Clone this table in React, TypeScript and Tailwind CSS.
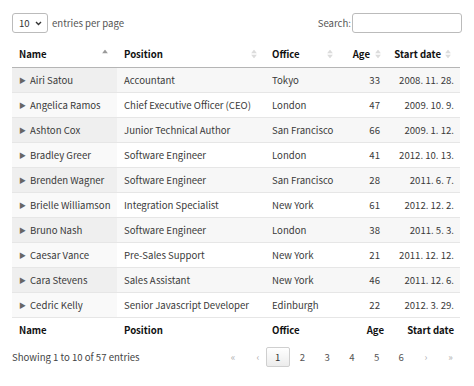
const rows = [
  ['Airi Satou', 'Accountant', 'Tokyo', 33, '2008. 11. 28.'],
  ['Angelica Ramos', 'Chief Executive Officer (CEO)', 'London', 47, '2009. 10. 9.'],
  ['Ashton Cox', 'Junior Technical Author', 'San Francisco', 66, '2009. 1. 12.'],
  ['Bradley Greer', 'Software Engineer', 'London', 41, '2012. 10. 13.'],
  ['Brenden Wagner', 'Software Engineer', 'San Francisco', 28, '2011. 6. 7.'],
  ['Brielle Williamson', 'Integration Specialist', 'New York', 61, '2012. 12. 2.'],
  ['Bruno Nash', 'Software Engineer', 'London', 38, '2011. 5. 3.'],
  ['Caesar Vance', 'Pre-Sales Support', 'New York', 21, '2011. 12. 12.'],
  ['Cara Stevens', 'Sales Assistant', 'New York', 46, '2011. 12. 6.'],
  ['Cedric Kelly', 'Senior Javascript Developer', 'Edinburgh', 22, '2012. 3. 29.'],
] as const;

function SortIcon({ active }: { active?: boolean }) {
  return (
    <span className="absolute right-[9px] top-1/2 -translate-y-1/2 flex flex-col items-center gap-[1px]">
      <svg width="6" height="4" viewBox="0 0 6 4">
        <path d="M3 0L6 4H0z" fill={active ? '#9a9a9a' : '#dcdcdc'} />
      </svg>
      <svg width="6" height="4" viewBox="0 0 6 4">
        <path d="M0 0H6L3 4z" fill={active ? '#ffffff' : '#dcdcdc'} />
      </svg>
    </span>
  );
}

export default function App() {
  return (
    <div
      className="w-[474px] h-[386px] bg-white px-3 text-[9.6px] text-[#3a3a3a]"
      style={{ fontFamily: '"Noto Sans CJK KR", "Noto Sans", sans-serif' }}
    >
      <div className="flex items-center justify-between pt-[13px] h-[33px]">
        <div className="flex items-center gap-[4px]">
          <div className="w-[36px] h-[20px] border border-[#bbb] rounded-[3px] flex items-center justify-between pl-[6px] pr-[5px] text-[#333]">
            <span>10</span>
            <svg width="7" height="5" viewBox="0 0 7 5">
              <path d="M1 1l2.5 2.5L6 1" stroke="#333" strokeWidth="1.4" fill="none" />
            </svg>
          </div>
          <span className="text-[#555]">entries per page</span>
        </div>
        <div className="flex items-center gap-[1px]">
          <span className="text-[#555]">Search:</span>
          <div className="w-[110px] h-[20px] border border-[#bbb] rounded-[3px]" />
        </div>
      </div>

      <table className="mt-[9px] w-[448px] table-fixed border-collapse leading-[14px]">
        <colgroup>
          <col className="w-[105px]" />
          <col className="w-[149px]" />
          <col className="w-[76px]" />
          <col className="w-[48px]" />
          <col className="w-[70px]" />
        </colgroup>
        <thead>
          <tr className="h-[25px] border-b border-[#b5b5b5] font-bold text-[#111] whitespace-nowrap">
            <th className="relative text-left pl-[7px]">Name<SortIcon active /></th>
            <th className="relative text-left pl-[7px]">Position<SortIcon /></th>
            <th className="relative text-left pl-[6px]">Office<SortIcon /></th>
            <th className="relative text-right pr-[20px]">Age<SortIcon /></th>
            <th className="relative text-right pr-[19px]">Start date<SortIcon /></th>
          </tr>
        </thead>
        <tbody>
          {rows.map((r, i) => {
            const odd = i % 2 === 0;
            return (
              <tr
                key={r[0]}
                className={`h-[25px] border-b border-[#e6e6e6] whitespace-nowrap ${odd ? 'bg-[#f7f7f7]' : 'bg-white'}`}
              >
                <td className={`pl-[7px] ${odd ? 'bg-[#efefef]' : 'bg-[#f9f9f9]'}`}>
                  <span className="inline-block text-[7px] text-[#666] mr-[4px] align-[1px]">▶</span>
                  {r[0]}
                </td>
                <td className="pl-[7px]">{r[1]}</td>
                <td className="pl-[6px]">{r[2]}</td>
                <td className="text-right pr-[10px]">{r[3]}</td>
                <td className="text-right pr-[6px]">{r[4]}</td>
              </tr>
            );
          })}
        </tbody>
        <tfoot>
          <tr className="h-[25px] border-t border-[#b5b5b5] font-bold text-[#111] whitespace-nowrap">
            <td className="pl-[7px]">Name</td>
            <td className="pl-[7px]">Position</td>
            <td className="pl-[6px]">Office</td>
            <td className="text-right pr-[6px]">Age</td>
            <td className="text-right pr-[6px]">Start date</td>
          </tr>
        </tfoot>
      </table>

      <div className="flex items-center justify-between mt-[5px] h-[20px]">
        <span className="text-[#444]">Showing 1 to 10 of 57 entries</span>
        <div className="flex items-center text-[#555] mr-[-1px]">
          {['«', '‹', '1', '2', '3', '4', '5', '6', '›', '»'].map((p) =>
            p === '1' ? (
              <span
                key={p}
                className="w-[24px] h-[20px] mx-[0.5px] flex items-center justify-center border border-[#cfcfcf] rounded-[2px] bg-gradient-to-b from-white to-[#ececec] text-[#333]"
              >
                {p}
              </span>
            ) : p === '«' || p === '‹' ? (
              <span key={p} className="w-[24.7px] h-[20px] pl-[10px] flex items-center justify-center text-[#aaa]">
                {p}
              </span>
            ) : (
              <span
                key={p}
                className={`w-[24.7px] h-[20px] flex items-center justify-center ${p === '›' || p === '»' ? 'text-[#aaa]' : ''}`}
              >
                {p}
              </span>
            )
          )}
        </div>
      </div>
    </div>
  );
}
